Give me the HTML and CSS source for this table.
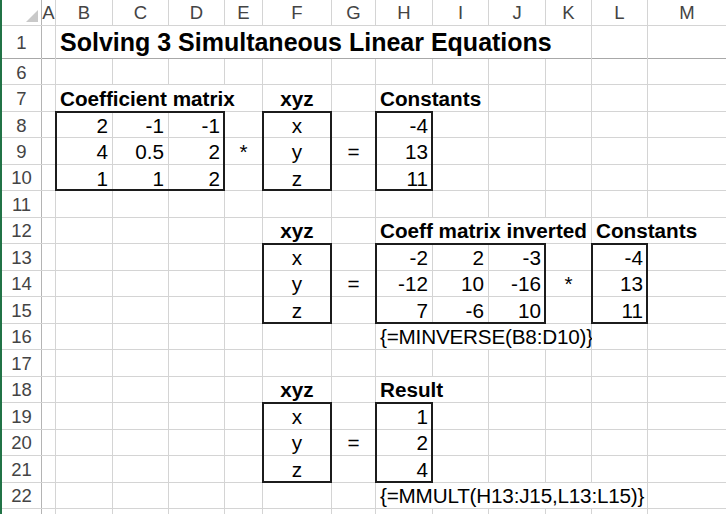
FILE: index.html
```html
<!DOCTYPE html>
<html>
<head>
<meta charset="utf-8">
<link rel="stylesheet" href="styles.css">
</head>
<body>
<div class="sheet">
  <!-- column headers -->
  <div class="corner"><svg width="12" height="12" viewBox="0 0 12 12"><polygon points="12,0 12,12 0,12" fill="#c9c9c9"/></svg></div>
  <div class="ch">A</div><div class="ch">B</div><div class="ch">C</div><div class="ch">D</div><div class="ch">E</div><div class="ch">F</div><div class="ch">G</div><div class="ch">H</div><div class="ch">I</div><div class="ch">J</div><div class="ch">K</div><div class="ch">L</div><div class="ch">M</div>

  <!-- row 1 -->
  <div class="rh r1">1</div><div class="r1"></div><div class="title r1 s10">Solving 3 Simultaneous Linear Equations</div><div class="r1"></div><div class="r1"></div>

  <!-- row 6 -->
  <div class="rh">6</div><div></div><div></div><div></div><div></div><div></div><div></div><div></div><div></div><div></div><div></div><div></div><div></div><div></div>

  <!-- row 7 -->
  <div class="rh">7</div><div></div><div class="bold s4">Coefficient matrix</div><div class="bold ctr">xyz</div><div></div><div class="bold s2">Constants</div><div></div><div></div><div></div><div></div>

  <!-- row 8 -->
  <div class="rh">8</div><div></div><div class="num">2</div><div class="num">-1</div><div class="num">-1</div><div></div><div class="ctr">x</div><div></div><div class="num">-4</div><div></div><div></div><div></div><div></div><div></div>

  <!-- row 9 -->
  <div class="rh">9</div><div></div><div class="num">4</div><div class="num">0.5</div><div class="num">2</div><div class="ctr">*</div><div class="ctr">y</div><div class="ctr">=</div><div class="num">13</div><div></div><div></div><div></div><div></div><div></div>

  <!-- row 10 -->
  <div class="rh">10</div><div></div><div class="num">1</div><div class="num">1</div><div class="num">2</div><div></div><div class="ctr">z</div><div></div><div class="num">11</div><div></div><div></div><div></div><div></div><div></div>

  <!-- row 11 -->
  <div class="rh">11</div><div></div><div></div><div></div><div></div><div></div><div></div><div></div><div></div><div></div><div></div><div></div><div></div><div></div>

  <!-- row 12 -->
  <div class="rh">12</div><div></div><div></div><div></div><div></div><div></div><div class="bold ctr">xyz</div><div></div><div class="bold s4">Coeff matrix inverted</div><div class="bold s2">Constants</div>

  <!-- row 13 -->
  <div class="rh">13</div><div></div><div></div><div></div><div></div><div></div><div class="ctr">x</div><div></div><div class="num">-2</div><div class="num">2</div><div class="num">-3</div><div></div><div class="num">-4</div><div></div>

  <!-- row 14 -->
  <div class="rh">14</div><div></div><div></div><div></div><div></div><div></div><div class="ctr">y</div><div class="ctr">=</div><div class="num">-12</div><div class="num">10</div><div class="num">-16</div><div class="ctr">*</div><div class="num">13</div><div></div>

  <!-- row 15 -->
  <div class="rh">15</div><div></div><div></div><div></div><div></div><div></div><div class="ctr">z</div><div></div><div class="num">7</div><div class="num">-6</div><div class="num">10</div><div></div><div class="num">11</div><div></div>

  <!-- row 16 -->
  <div class="rh">16</div><div></div><div></div><div></div><div></div><div></div><div></div><div></div><div class="formula s4">{=MINVERSE(B8:D10)}</div><div></div><div></div>

  <!-- row 17 -->
  <div class="rh">17</div><div></div><div></div><div></div><div></div><div></div><div></div><div></div><div></div><div></div><div></div><div></div><div></div><div></div>

  <!-- row 18 -->
  <div class="rh">18</div><div></div><div></div><div></div><div></div><div></div><div class="bold ctr">xyz</div><div></div><div class="bold s2">Result</div><div></div><div></div><div></div><div></div>

  <!-- row 19 -->
  <div class="rh">19</div><div></div><div></div><div></div><div></div><div></div><div class="ctr">x</div><div></div><div class="num">1</div><div></div><div></div><div></div><div></div><div></div>

  <!-- row 20 -->
  <div class="rh">20</div><div></div><div></div><div></div><div></div><div></div><div class="ctr">y</div><div class="ctr">=</div><div class="num">2</div><div></div><div></div><div></div><div></div><div></div>

  <!-- row 21 -->
  <div class="rh">21</div><div></div><div></div><div></div><div></div><div></div><div class="ctr">z</div><div></div><div class="num">4</div><div></div><div></div><div></div><div></div><div></div>

  <!-- row 22 -->
  <div class="rh">22</div><div></div><div></div><div></div><div></div><div></div><div></div><div></div><div class="formula s5">{=MMULT(H13:J15,L13:L15)}</div><div></div>

  <!-- row 23 (only its top edge is visible) -->
  <div class="rh"></div><div></div><div></div><div></div><div></div><div></div><div></div><div></div><div></div><div></div><div></div><div></div><div></div><div></div>

  <!-- cell borders drawn over the grid -->
  <div class="boxes">
    <div class="box box-coef"></div>
    <div class="box box-xyz1"></div>
    <div class="box box-const1"></div>
    <div class="box box-xyz2"></div>
    <div class="box box-inv"></div>
    <div class="box box-const2"></div>
    <div class="box box-xyz3"></div>
    <div class="box box-result"></div>
  </div>
</div>
</body>
</html>
```

FILE: styles.css
```css
html, body {
  margin: 0;
  padding: 0;
  background: #ffffff;
  overflow: hidden;
}

.sheet {
  position: relative;
  box-sizing: border-box;
  width: 726px;
  height: 514px;
  overflow: hidden;
  display: grid;
  grid-template-columns: 39px 13px 56px 55px 55px 37px 68px 43px 56px 55px 56px 45px 55px 1fr;
  grid-template-rows: 25px 32px repeat(18, 25.47px);
  gap: 1px;
  background: #d4d4d4;
  border-left: 2px solid #217346;
  font-family: "Liberation Sans", Arial, sans-serif;
  color: #000;
}

.sheet > div {
  background: #ffffff;
  display: flex;
  align-items: flex-end;
  padding: 0 4px;
  font-size: 20.7px;
  line-height: 1.15;
  white-space: nowrap;
  min-width: 0;
}

.sheet > .corner {
  justify-content: flex-end;
  align-items: flex-end;
  padding: 0 3px 3px 0;
  box-shadow: 1px 0 0 #b4b4b4;
}

.sheet > .ch,
.sheet > .rh {
  justify-content: center;
  align-items: center;
  padding: 0;
  font-size: 18.5px;
  color: #444444;
}

.sheet > .ch {
  padding-top: 1px;
}

.sheet > .rh {
  padding-top: 1px;
  box-shadow: 1px 0 0 #b4b4b4;
}

.sheet > .r1 {
  box-shadow: 0 1px 0 #a8a8a8;
}

.sheet > .rh.r1 {
  box-shadow: 0 1px 0 #a8a8a8, 1px 0 0 #b4b4b4;
}

.sheet > .title {
  font-size: 25px;
  font-weight: bold;
  padding-bottom: 1px;
}

.bold {
  font-weight: bold;
}

.formula {
  letter-spacing: -0.2px;
}

.sheet > .ctr {
  justify-content: center;
}

.sheet > .num {
  justify-content: flex-end;
}

.s2 { grid-column: span 2; }
.s4 { grid-column: span 4; }
.s5 { grid-column: span 5; }
.s10 { grid-column: span 10; }

.sheet > .boxes {
  position: absolute;
  top: 0;
  left: 0;
  right: 0;
  bottom: 0;
  padding: 0;
  background: transparent;
  box-shadow: none;
  display: grid;
  align-items: stretch;
  grid-template-columns: 39px 13px 56px 55px 55px 37px 68px 43px 56px 55px 56px 45px 55px 1fr;
  grid-template-rows: 25px 32px repeat(18, 25.47px);
  gap: 1px;
  pointer-events: none;
}

.box {
  border: 2px solid #1c1c1c;
  margin: -1px;
}

.box-coef   { grid-column: 3 / 6;   grid-row: 5 / 8; }
.box-xyz1   { grid-column: 7 / 8;   grid-row: 5 / 8; }
.box-const1 { grid-column: 9 / 10;  grid-row: 5 / 8; }
.box-xyz2   { grid-column: 7 / 8;   grid-row: 10 / 13; }
.box-inv    { grid-column: 9 / 12;  grid-row: 10 / 13; }
.box-const2 { grid-column: 13 / 14; grid-row: 10 / 13; }
.box-xyz3   { grid-column: 7 / 8;   grid-row: 16 / 19; }
.box-result { grid-column: 9 / 10;  grid-row: 16 / 19; }
```
